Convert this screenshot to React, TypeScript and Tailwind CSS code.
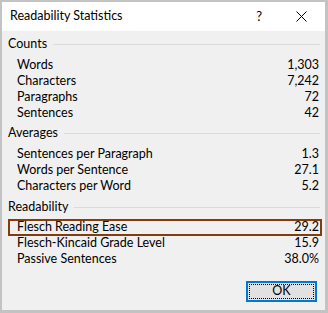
import type { ReactNode } from 'react'

type Row = { label: string; value: string; highlight?: boolean }

const sections: { title: string; top: string; gap: string; rows: Row[] }[] = [
  {
    title: 'Counts',
    top: 'mt-0',
    gap: 'mt-[5px]',
    rows: [
      { label: 'Words', value: '1,303' },
      { label: 'Characters', value: '7,242' },
      { label: 'Paragraphs', value: '72' },
      { label: 'Sentences', value: '42' },
    ],
  },
  {
    title: 'Averages',
    top: 'mt-[4px]',
    gap: 'mt-[5px]',
    rows: [
      { label: 'Sentences per Paragraph', value: '1.3' },
      { label: 'Words per Sentence', value: '27.1' },
      { label: 'Characters per Word', value: '5.2' },
    ],
  },
  {
    title: 'Readability',
    top: 'mt-[5px]',
    gap: 'mt-[4px]',
    rows: [
      { label: 'Flesch Reading Ease', value: '29.2', highlight: true },
      { label: 'Flesch-Kincaid Grade Level', value: '15.9' },
      { label: 'Passive Sentences', value: '38.0%' },
    ],
  },
]

function GroupHeading({ children }: { children: ReactNode }) {
  return (
    <div className="ml-[6px] mr-[5px] flex h-4 items-center gap-[6px]">
      <span className="leading-4">{children}</span>
      <div className="h-px flex-1 bg-[#dadada]" />
    </div>
  )
}

function StatRow({ label, value, highlight }: Row) {
  return (
    <div className="relative ml-[6px] mr-[3px] flex h-4 items-center justify-between pl-[9px] pr-[3px]">
      {highlight ? (
        <span className="absolute inset-x-0 top-0 bottom-[-1px] border-2 border-[#843c0c]" />
      ) : null}
      <span>{label}</span>
      <span>{value}</span>
    </div>
  )
}

export default function App() {
  return (
    <div
      className="flex h-[313px] w-[328px] flex-col border-b-[3px] border-l-2 border-r-[3px] border-t-2 border-[#c3c3c3] text-[12.5px] text-black"
      style={{ fontFamily: 'Lato, "Liberation Sans", sans-serif' }}
    >
      <div className="flex h-[29px] items-center bg-white">
        <span className="ml-[8px] flex-1 text-[12.5px]">Readability Statistics</span>
        <span className="mr-[34px] text-[13px]">?</span>
        <svg width="11" height="11" viewBox="0 0 11 11" className="mr-[18px]">
          <path d="M0.5 0.5 L10.5 10.5 M10.5 0.5 L0.5 10.5" stroke="#000" strokeWidth="1" />
        </svg>
      </div>
      <div className="flex flex-1 flex-col bg-[#f0f0f0] pt-[5px]">
        {sections.map((s) => (
          <div key={s.title} className={s.top}>
            <GroupHeading>{s.title}</GroupHeading>
            <div className={`${s.gap} flex flex-col`}>
              {s.rows.map((r) => (
                <StatRow key={r.label} {...r} />
              ))}
            </div>
          </div>
        ))}
        <div className="mr-[8px] mt-[14px] flex justify-end">
          <button className="flex h-[21px] w-[71px] items-center justify-center border-2 border-[#0078d7] bg-[#e1e1e1] p-px">
            <span className="flex h-full w-full items-center justify-center border border-dotted border-black text-[12.5px]">
              OK
            </span>
          </button>
        </div>
      </div>
    </div>
  )
}
